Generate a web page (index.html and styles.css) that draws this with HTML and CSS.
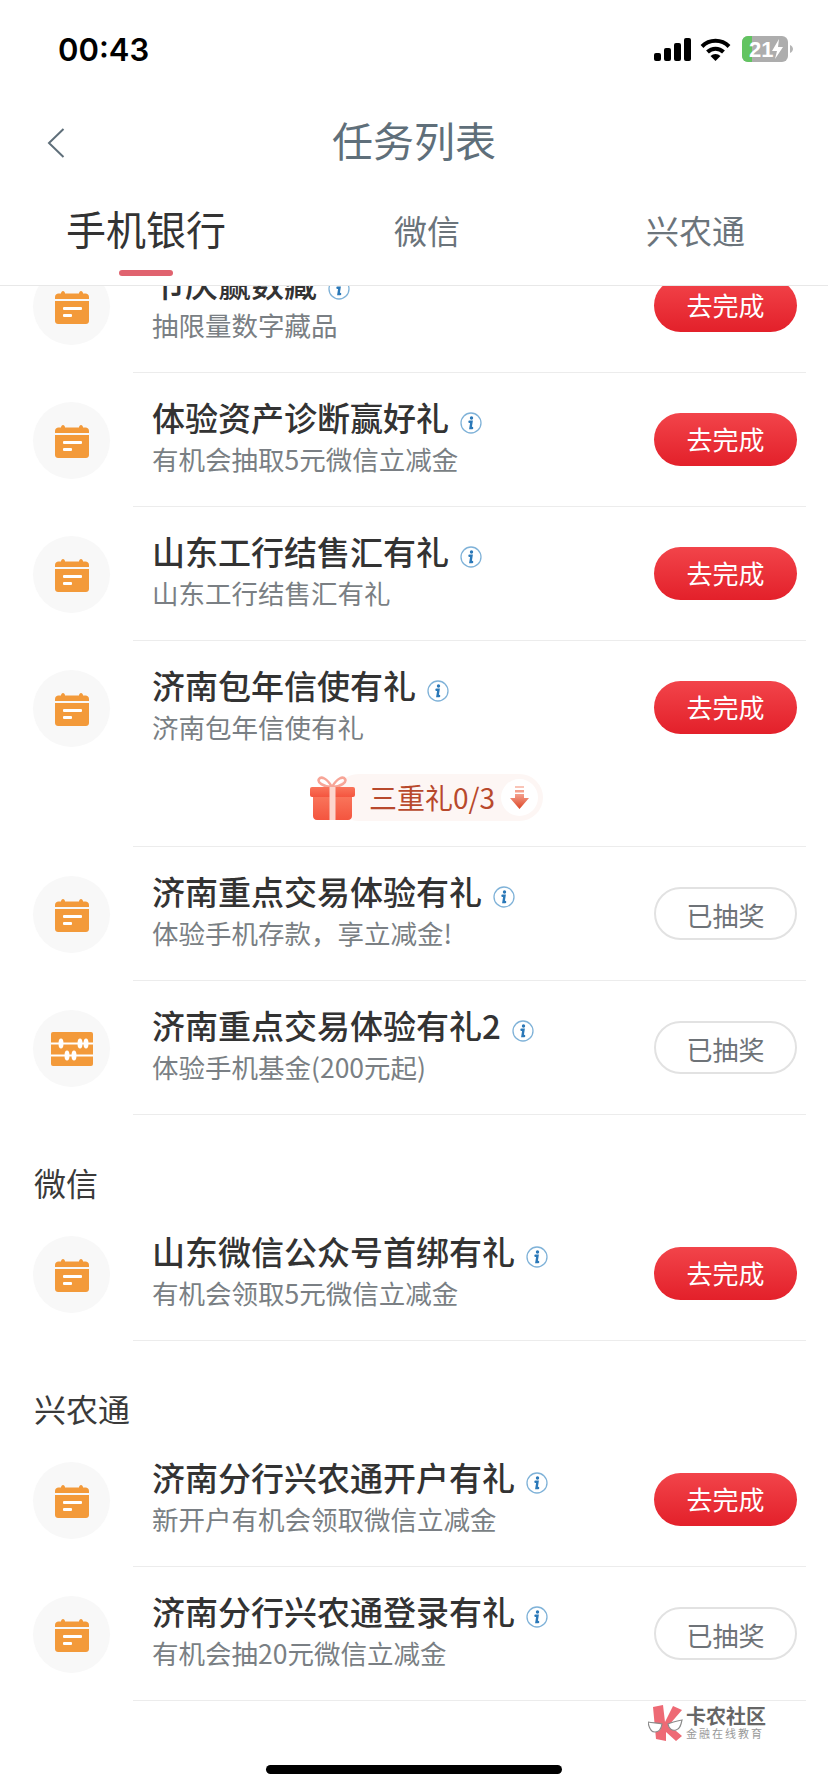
FILE: index.html
```html
<!DOCTYPE html>
<html lang="zh-CN">
<head>
    <meta charset="UTF-8">
    <title>任务列表</title>
    <link rel="stylesheet" href="styles.css">
</head>
<body>
<svg class="defs" width="0" height="0">
    <symbol id="cal" viewBox="0 0 34 35">
        <path fill="#f39a3a" d="M0 8c0-2 1.500-3.500 3.500-3.500H6C6 1 10 1 10 4.500h14C24 1 28 1 28 4.500h2.500C32.500 4.500 34 6 34 8v2H0z"/>
        <path fill="#f39a3a" d="M0 12h34v20c0 2-1.500 3-3 3H3c-1.500 0-3-1-3-3z"/>
        <rect x="8" y="18" width="19" height="3" rx="1" fill="#fff"/>
        <rect x="8" y="25" width="9" height="3" rx="1" fill="#fff"/>
    </symbol>
    <symbol id="info" viewBox="0 0 22 22">
        <circle cx="11" cy="11" r="10" fill="#fff" stroke="#7fb2d8" stroke-width="1.300"/>
        <circle cx="11.500" cy="6" r="1.700" fill="#2a78b8"/>
        <path fill="none" stroke="#2a78b8" stroke-width="2.400" stroke-linecap="round" d="M9.500 9.800h2l-1 6.200h1.600"/>
    </symbol>
</svg>

<div class="header">
    <div class="status">
        <span class="time">00:43</span>
        <div class="status-icons">
            <svg width="37" height="23" viewBox="0 0 37 23">
                <rect x="0" y="15" width="7" height="8" rx="2"/>
                <rect x="10" y="10" width="7" height="13" rx="2"/>
                <rect x="20" y="5" width="7" height="18" rx="2"/>
                <rect x="30" y="0" width="7" height="23" rx="2"/>
            </svg>
            <svg class="wifi" width="31" height="24" viewBox="0 0 31 24">
                <path fill="none" stroke="#000" stroke-width="4" d="M2 9.500a19 19 0 0 1 27 0M7.500 15a11.500 11.500 0 0 1 16 0"/>
                <path d="M10.500 19a7.500 7.500 0 0 1 10 0l-5 5z"/>
            </svg>
            <svg class="battery" width="51" height="26" viewBox="0 0 51 26">
                <rect x="0" y="0" width="46" height="26" rx="6" fill="#adadad"/>
                <path d="M6 0h4v26H6a6 6 0 0 1-6-6V6a6 6 0 0 1 6-6z" fill="#62c461"/>
                <text x="7" y="21" class="battery-num">21</text>
                <path d="M37 3l-7 12h5l-2 8 8-12h-5z" fill="#fff"/>
                <path d="M48 9c2 1 3 2.500 3 4s-1 3-3 4z" fill="#b5b5b5"/>
            </svg>
        </div>
    </div>
    <div class="nav">
        <svg class="back" width="18" height="30" viewBox="0 0 18 30"><path d="M16.500 1L2 15l14.500 14" fill="none" stroke="#5f6f7a" stroke-width="2"/></svg>
        <span class="nav-title">任务列表</span>
    </div>
    <div class="tabs">
        <span class="tab tab-on">手机银行</span>
        <span class="tab tab-wx">微信</span>
        <span class="tab tab-xn">兴农通</span>
    </div>
</div>

<div class="list">
    <div class="list-inner">
        <div class="task">
            <div class="task-icon"><svg width="34" height="35"><use href="#cal"/></svg></div>
            <div class="task-main">
                <div class="task-top">
                    <div class="task-text">
                        <div class="task-title">节庆赢数藏<svg class="info" width="22" height="22"><use href="#info"/></svg></div>
                        <div class="task-sub">抽限量数字藏品</div>
                    </div>
                    <span class="btn btn-go">去完成</span>
                </div>
            </div>
        </div>
        <div class="task">
            <div class="task-icon"><svg width="34" height="35"><use href="#cal"/></svg></div>
            <div class="task-main">
                <div class="task-top">
                    <div class="task-text">
                        <div class="task-title">体验资产诊断赢好礼<svg class="info" width="22" height="22"><use href="#info"/></svg></div>
                        <div class="task-sub">有机会抽取5元微信立减金</div>
                    </div>
                    <span class="btn btn-go">去完成</span>
                </div>
            </div>
        </div>
        <div class="task">
            <div class="task-icon"><svg width="34" height="35"><use href="#cal"/></svg></div>
            <div class="task-main">
                <div class="task-top">
                    <div class="task-text">
                        <div class="task-title">山东工行结售汇有礼<svg class="info" width="22" height="22"><use href="#info"/></svg></div>
                        <div class="task-sub">山东工行结售汇有礼</div>
                    </div>
                    <span class="btn btn-go">去完成</span>
                </div>
            </div>
        </div>
        <div class="task">
            <div class="task-icon"><svg width="34" height="35"><use href="#cal"/></svg></div>
            <div class="task-main">
                <div class="task-top">
                    <div class="task-text">
                        <div class="task-title">济南包年信使有礼<svg class="info" width="22" height="22"><use href="#info"/></svg></div>
                        <div class="task-sub">济南包年信使有礼</div>
                    </div>
                    <span class="btn btn-go">去完成</span>
                </div>
                <div class="gift-row">
                    <svg class="gift" width="45" height="44" viewBox="0 0 45 44">
                        <defs>
                            <linearGradient id="giftbg" x1="0" y1="0" x2="0" y2="1">
                                <stop offset="0" stop-color="#f9745a"/>
                                <stop offset="1" stop-color="#f4553f"/>
                            </linearGradient>
                            <linearGradient id="arrowbg" x1="0" y1="0" x2="0" y2="1">
                                <stop offset="0" stop-color="#f4a08c"/>
                                <stop offset="1" stop-color="#dc4526"/>
                            </linearGradient>
                        </defs>
                        <path d="M22 11C17 2 11 0 9 3s4 8 13 8c9 0 15-5 13-8s-8-1-13 8z" fill="none" stroke="#f7a597" stroke-width="2.500"/>
                        <rect x="0" y="11" width="45" height="10" rx="2" fill="url(#giftbg)"/>
                        <path d="M3 21h39v19c0 2-1.500 4-4 4H7c-2.500 0-4-2-4-4z" fill="url(#giftbg)"/>
                        <rect x="19.500" y="11" width="6" height="33" fill="#fcd6cd"/>
                    </svg>
                    <div class="gift-pill">
                        <span class="gift-text">三重礼0/3</span>
                        <span class="gift-arrow">
                            <svg width="19" height="23" viewBox="0 0 19 23">
                                <rect x="5" y="0" width="9" height="2" fill="#f9c4b7"/>
                                <rect x="5" y="4" width="9" height="2.500" fill="#f4a08c"/>
                                <path d="M5 8h9v4h5l-9.500 11L0 12h5z" fill="url(#arrowbg)"/>
                            </svg>
                        </span>
                    </div>
                </div>
            </div>
        </div>
        <div class="task">
            <div class="task-icon"><svg width="34" height="35"><use href="#cal"/></svg></div>
            <div class="task-main">
                <div class="task-top">
                    <div class="task-text">
                        <div class="task-title">济南重点交易体验有礼<svg class="info" width="22" height="22"><use href="#info"/></svg></div>
                        <div class="task-sub">体验手机存款，享立减金!</div>
                    </div>
                    <span class="btn btn-done">已抽奖</span>
                </div>
            </div>
        </div>
        <div class="task">
            <div class="task-icon">
                <svg width="42" height="34" viewBox="0 0 42 34">
                    <rect width="42" height="34" rx="2" fill="#f39a3a"/>
                    <path d="M0 11.500h42M0 23.500h42" stroke="#fff" stroke-width="2"/>
                    <g fill="#fff">
                        <ellipse cx="10" cy="11.500" rx="2.500" ry="5"/>
                        <ellipse cx="29" cy="11.500" rx="2.500" ry="5"/>
                        <ellipse cx="35" cy="11.500" rx="2.500" ry="5"/>
                        <ellipse cx="16" cy="23.500" rx="2.500" ry="5"/>
                        <ellipse cx="23" cy="23.500" rx="2.500" ry="5"/>
                    </g>
                </svg>
            </div>
            <div class="task-main">
                <div class="task-top">
                    <div class="task-text">
                        <div class="task-title">济南重点交易体验有礼2<svg class="info" width="22" height="22"><use href="#info"/></svg></div>
                        <div class="task-sub">体验手机基金(200元起)</div>
                    </div>
                    <span class="btn btn-done">已抽奖</span>
                </div>
            </div>
        </div>

        <div class="section">微信</div>
        <div class="task">
            <div class="task-icon"><svg width="34" height="35"><use href="#cal"/></svg></div>
            <div class="task-main">
                <div class="task-top">
                    <div class="task-text">
                        <div class="task-title">山东微信公众号首绑有礼<svg class="info" width="22" height="22"><use href="#info"/></svg></div>
                        <div class="task-sub">有机会领取5元微信立减金</div>
                    </div>
                    <span class="btn btn-go">去完成</span>
                </div>
            </div>
        </div>

        <div class="section">兴农通</div>
        <div class="task">
            <div class="task-icon"><svg width="34" height="35"><use href="#cal"/></svg></div>
            <div class="task-main">
                <div class="task-top">
                    <div class="task-text">
                        <div class="task-title">济南分行兴农通开户有礼<svg class="info" width="22" height="22"><use href="#info"/></svg></div>
                        <div class="task-sub">新开户有机会领取微信立减金</div>
                    </div>
                    <span class="btn btn-go">去完成</span>
                </div>
            </div>
        </div>
        <div class="task">
            <div class="task-icon"><svg width="34" height="35"><use href="#cal"/></svg></div>
            <div class="task-main">
                <div class="task-top">
                    <div class="task-text">
                        <div class="task-title">济南分行兴农通登录有礼<svg class="info" width="22" height="22"><use href="#info"/></svg></div>
                        <div class="task-sub">有机会抽20元微信立减金</div>
                    </div>
                    <span class="btn btn-done">已抽奖</span>
                </div>
            </div>
        </div>
    </div>
</div>

<!-- 水印 -->
<div class="mark">
    <svg width="35" height="36" viewBox="0 0 35 36">
        <path d="M5 2l10-2 2 17 8-16 9 4-13 15 13 11-6 5-10-9 0 9-10-2z" fill="#ee6a75"/>
        <path d="M0 17c5 1 10 1 14 2-1 6-3 8-7 8-4 0-6-4-7-10z" fill="#fff" stroke="#8a8a8a" stroke-width="1.200"/>
        <path d="M34 15c-5 1-10 2-14 4 1 5 4 7 8 6 4-1 5-5 6-10z" fill="#fff" stroke="#8a8a8a" stroke-width="1.200"/>
    </svg>
    <div class="mark-text">
        <div class="mark-name">卡农社区</div>
        <div class="mark-sub">金融在线教育</div>
    </div>
</div>
<div class="home-bar"></div>
</body>
</html>
```

FILE: styles.css
```css
*{
    margin:0;
    padding:0;
    box-sizing: border-box;
}
html,body{
    height: 100%;
    overflow: hidden;
    background: #fff;
    font-family: "Noto Sans CJK SC", "Noto Sans", sans-serif;
}
body{
    position: relative;
    display: flex;
    flex-direction: column;
}
.defs{
    position: absolute;
}

/* header */
.header{
    height: 286px;
    flex-shrink: 0;
    border-bottom: 1px solid #e8e8e8;
    background: #fff;
}
.status{
    height: 98px;
    display: flex;
    align-items: center;
    justify-content: space-between;
    padding: 0 35px 0 58px;
}
.time{
    font-family: "Inter", "Liberation Sans", sans-serif;
    font-size: 31px;
    font-weight: 600;
    color: #000;
}
.status-icons{
    display: flex;
    align-items: center;
}
.wifi{
    margin-left: 9px;
}
.battery{
    margin-left: 11px;
}
.battery-num{
    font-family: "Liberation Sans", sans-serif;
    font-size: 22px;
    font-weight: 700;
    fill: #fff;
}
.nav{
    height: 90px;
    display: flex;
    align-items: flex-start;
    justify-content: center;
    position: relative;
}
.back{
    position: absolute;
    left: 47px;
    top: 30px;
}
.nav-title{
    font-size: 41px;
    color: #5f6f7a;
    line-height: 83px;
}
.tabs{
    height: 97px;
    display: flex;
    align-items: flex-start;
}
.tab{
    font-size: 33px;
    line-height: 84px;
    color: #6b747b;
    position: relative;
}
.tab-on{
    font-size: 40px;
    line-height: 81px;
    color: #333;
    margin-left: 66px;
    height: 88px;
}
.tab-on:after{
    content: "";
    position: absolute;
    left: 53px;
    top: 82px;
    width: 54px;
    height: 6px;
    border-radius: 3px;
    background: #e0636f;
}
.tab-wx{
    margin-left: 168px;
}
.tab-xn{
    margin-left: 186px;
}

/* list */
.list{
    flex: 1;
    overflow: hidden;
}
.list-inner{
    margin-top: -47px;
}
.task{
    display: flex;
    align-items: flex-start;
}
.task-icon{
    width: 77px;
    height: 77px;
    margin: 29px 23px 0 33px;
    flex-shrink: 0;
    border-radius: 50%;
    background: #f8f8f8;
    display: flex;
    align-items: center;
    justify-content: center;
}
.task-main{
    width: 673px;
    border-bottom: 1px solid #ececec;
}
.task-top{
    height: 133px;
    display: flex;
    align-items: center;
    justify-content: space-between;
    padding: 0 9px 0 19px;
}
.task-text{
    padding-bottom: 6px;
}
.task-title{
    font-size: 33px;
    font-weight: 500;
    line-height: 44px;
    color: #333;
    display: flex;
    align-items: center;
}
.info{
    margin: 12px 0 0 11px;
}
.task-sub{
    font-size: 26.5px;
    line-height: 40px;
    color: #7a7f84;
}
.btn{
    width: 143px;
    height: 53px;
    border-radius: 27px;
    font-size: 26px;
    line-height: 51px;
    text-align: center;
    flex-shrink: 0;
}
.btn-go{
    color: #fff;
    background: linear-gradient(#f2444a, #e3202a);
}
.btn-done{
    color: #6e7378;
    border: 2px solid #e2e2e2;
    background: #fff;
}

/* 三重礼 */
.gift-row{
    display: flex;
    align-items: center;
    height: 72px;
    padding: 0 0 25px 177px;
}
.gift{
    position: relative;
    z-index: 1;
    flex-shrink: 0;
}
.gift-pill{
    height: 47px;
    margin-left: -20px;
    padding: 0 5px 0 34px;
    border-radius: 24px;
    background: #fdf6f4;
    display: flex;
    align-items: center;
}
.gift-text{
    font-size: 28px;
    color: #b8492c;
    line-height: 47px;
}
.gift-arrow{
    width: 37px;
    height: 37px;
    margin-left: 6px;
    border-radius: 50%;
    background: #fff;
    display: flex;
    align-items: center;
    justify-content: center;
}

.section{
    height: 92px;
    padding: 44px 0 0 34px;
    font-size: 32px;
    line-height: 46px;
    color: #3a3a3a;
}

/* 水印 */
.mark{
    position: absolute;
    left: 648px;
    top: 1705px;
    display: flex;
    align-items: center;
}
.mark-text{
    margin-left: 3px;
}
.mark-name{
    font-size: 20px;
    font-weight: 700;
    line-height: 20px;
    color: #666;
}
.mark-sub{
    font-size: 11px;
    letter-spacing: 2px;
    line-height: 14px;
    color: #999;
}
.home-bar{
    position: absolute;
    left: 266px;
    top: 1765px;
    width: 296px;
    height: 9px;
    border-radius: 5px;
    background: #000;
}
```
